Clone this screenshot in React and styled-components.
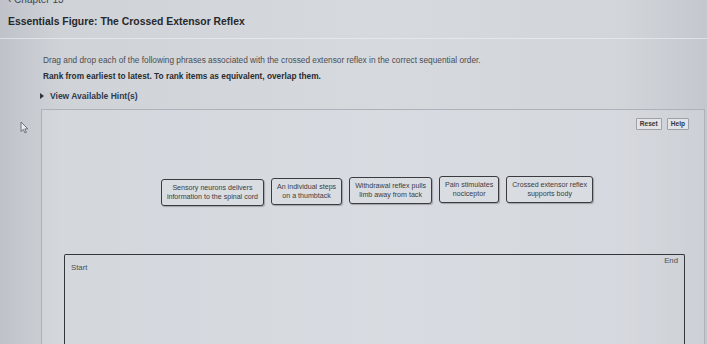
import React from 'react';
import styled, { createGlobalStyle } from 'styled-components';

const GlobalStyle = createGlobalStyle`
  html, body {
    margin: 0;
    padding: 0;
    width: 707px;
    height: 344px;
    overflow: hidden;
    font-family: "Liberation Sans", Arial, sans-serif;
    background: linear-gradient(90deg, #bfc3c9 0px, #cfd3d8 60px, #d6d9de 380px, #d2d5da 620px, #c4c8ce 707px);
    color: #2a2c30;
  }
`;

const Page = styled.div`
  display: flex;
  flex-direction: column;
  height: 344px;
`;

const ChapterLink = styled.div`
  font-size: 10px;
  line-height: 12px;
  color: #3d4652;
  padding-left: 8px;
  margin-top: -6px;
  height: 10px;
`;

const Title = styled.h1`
  margin: 0;
  font-size: 10.4px;
  font-weight: bold;
  color: #26282c;
  padding: 12px 8px 11px;
  border-bottom: 1px solid rgba(240, 242, 246, 0.6);
`;

const Instructions = styled.div`
  display: flex;
  flex-direction: column;
  padding: 16px 0 0 43px;
`;

const Line = styled.p`
  margin: 0 0 6px;
  font-size: 8.3px;
  line-height: 10px;
  font-weight: ${p => (p.$bold ? 'bold' : 'normal')};
  color: ${p => (p.$bold ? '#2a2c30' : '#4a4d52')};
`;

const Hint = styled.div`
  display: flex;
  align-items: center;
  gap: 6px;
  margin: 4px 0 0 -3px;
  font-size: 8.5px;
  line-height: 10px;
  font-weight: bold;
  color: #2e3a4e;
`;

const Triangle = styled.span`
  width: 0;
  height: 0;
  border-top: 3px solid transparent;
  border-bottom: 3px solid transparent;
  border-left: 4px solid #2e3440;
`;

const Body = styled.div`
  display: flex;
  flex: 1;
  margin-top: 8px;
`;

const Gutter = styled.div`
  width: 41px;
  flex-shrink: 0;
  padding: 11px 0 0 20px;
  box-sizing: border-box;
`;

const Panel = styled.div`
  width: 662px;
  border: 1px solid #aeb2b8;
  border-bottom: none;
  display: flex;
  flex-direction: column;
  background: rgba(220, 223, 228, 0.35);
`;

const Toolbar = styled.div`
  display: flex;
  justify-content: flex-end;
  gap: 5px;
  padding: 8px 15px 0 0;
`;

const ToolButton = styled.button`
  font-family: "Liberation Sans", Arial, sans-serif;
  font-size: 6.6px;
  font-weight: bold;
  color: #33363b;
  background: #e2e4e8;
  border: 1px solid #9ea2a8;
  border-radius: 1px;
  padding: 1px 3px;
  line-height: 8px;
`;

const Cards = styled.div`
  display: flex;
  justify-content: center;
  align-items: flex-start;
  gap: 7px;
  margin: 46px 0 0 8px;
`;

const Card = styled.div`
  border: 1.4px solid #3a3c40;
  border-radius: 3px;
  background: #d9dce1;
  box-shadow: 1px 1px 1px rgba(60, 62, 66, 0.35);
  padding: 4px 5px;
  font-size: 7.1px;
  line-height: 8.5px;
  text-align: center;
  color: #3a3d42;
  white-space: pre-line;
  margin-top: ${p => p.$drop}px;
`;

const RankBox = styled.div`
  margin: 48px 19px 0 22px;
  flex: 1;
  border: 1px solid #33363a;
  border-bottom: none;
  border-radius: 2px 2px 0 0;
  display: flex;
  justify-content: space-between;
  padding: 1px 6px 0 6px;
  font-size: 7.8px;
  color: #4a4d52;
`;

const RankLabel = styled.span`
  margin-top: ${p => p.$top}px;
`;

const cards = [
  { text: 'Sensory neurons delivers\ninformation to the spinal cord', drop: 3 },
  { text: 'An individual steps\non a thumbtack', drop: 2 },
  { text: 'Withdrawal reflex pulls\nlimb away from tack', drop: 1 },
  { text: 'Pain stimulates\nnociceptor', drop: 0 },
  { text: 'Crossed extensor reflex\nsupports body', drop: 0 },
];

function Cursor() {
  return (
    <svg width="9" height="13" viewBox="0 0 9 13">
      <path d="M1 1 L1 10.5 L3.3 8.4 L5 12 L6.4 11.3 L4.8 7.9 L7.8 7.8 Z"
        fill="#e8eaee" stroke="#55595f" strokeWidth="0.8" strokeLinejoin="round" />
    </svg>
  );
}

function App() {
  return (
    <Page>
      <GlobalStyle />
      <ChapterLink>‹ Chapter 13</ChapterLink>
      <Title>Essentials Figure: The Crossed Extensor Reflex</Title>
      <Instructions>
        <Line>Drag and drop each of the following phrases associated with the crossed extensor reflex in the correct sequential order.</Line>
        <Line $bold>Rank from earliest to latest. To rank items as equivalent, overlap them.</Line>
        <Hint><Triangle />View Available Hint(s)</Hint>
      </Instructions>
      <Body>
        <Gutter><Cursor /></Gutter>
        <Panel>
          <Toolbar>
            <ToolButton>Reset</ToolButton>
            <ToolButton>Help</ToolButton>
          </Toolbar>
          <Cards>
            {cards.map(c => (
              <Card key={c.text} $drop={c.drop}>{c.text}</Card>
            ))}
          </Cards>
          <RankBox>
            <RankLabel $top={7}>Start</RankLabel>
            <RankLabel $top={0}>End</RankLabel>
          </RankBox>
        </Panel>
      </Body>
    </Page>
  );
}

export default App;
